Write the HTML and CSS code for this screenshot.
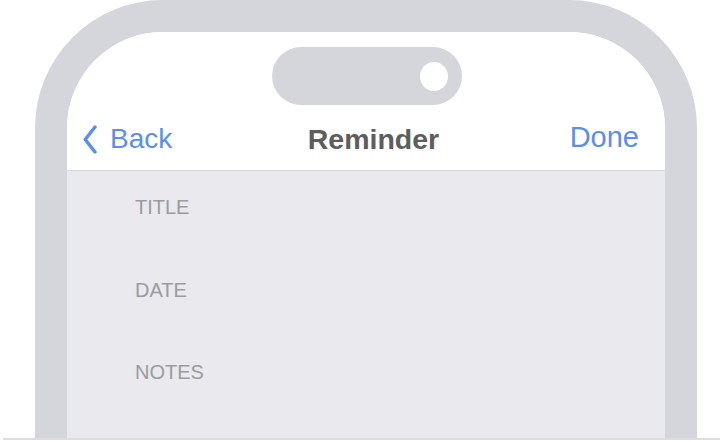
FILE: index.html
```html
<!DOCTYPE html>
<html>
<head>
<meta charset="utf-8">
<link rel="stylesheet" href="styles.css">
</head>
<body>
<div class="stage">
  <div class="phone">
    <div class="screen">
      <header class="nav">
        <div class="island"><span class="camera"></span></div>
        <div class="nav-row">
          <a class="back">
            <svg class="chevron" width="16" height="30" viewBox="0 0 16 30"><path d="M12 2 L2.2 14.5 L12 27" fill="none" stroke="#5b8fea" stroke-width="3.4" stroke-linecap="round" stroke-linejoin="round"/></svg>
            <span>Back</span>
          </a>
          <h1 class="title">Reminder</h1>
          <a class="done">Done</a>
        </div>
      </header>
      <main class="content">
        <div class="label">TITLE</div>
        <div class="label">DATE</div>
        <div class="label">NOTES</div>
      </main>
    </div>
  </div>
</div>
</body>
</html>
```

FILE: styles.css
```css
html, body {
  margin: 0;
  padding: 0;
  background: #ffffff;
}
body {
  font-family: "Liberation Sans", Arial, sans-serif;
}
.stage {
  margin-left: 3px;
  width: 717px;
  height: 438px;
  overflow: hidden;
  border-bottom: 2px solid #dddde1;
}
.phone {
  margin-left: 32px;
  width: 598px;
  height: 600px;
  border: 32px solid #d5d6db;
  border-bottom: none;
  border-radius: 128px 128px 0 0;
  overflow: hidden;
  background: #ffffff;
}
.screen {
  display: flex;
  flex-direction: column;
  height: 100%;
}
.nav {
  background: #ffffff;
  display: flex;
  flex-direction: column;
  align-items: center;
  padding-top: 15px;
  padding-bottom: 15px;
  border-bottom: 1px solid #d7d7dc;
}
.island {
  width: 190px;
  height: 58px;
  border-radius: 29px;
  background: #d5d6db;
  display: flex;
  align-items: center;
  justify-content: flex-end;
  padding-right: 14px;
  box-sizing: border-box;
  margin-left: 2px;
}
.camera {
  width: 28px;
  height: 29px;
  border-radius: 50%;
  background: #ffffff;
}
.nav-row {
  margin-top: 18px;
  align-self: stretch;
  display: flex;
  align-items: flex-start;
  justify-content: space-between;
  padding: 0 26px 0 16px;
  height: 32px;
}
.back {
  display: flex;
  align-items: flex-start;
  gap: 11px;
  color: #5b8fea;
  font-size: 28px;
  line-height: 32px;
}
.chevron {
  display: block;
  margin-top: 1.5px;
}
.title {
  margin: 0 0 0 5px;
  font-size: 28.5px;
  line-height: 32px;
  font-weight: 700;
  color: #5d5d5d;
}
.done {
  color: #5b8fea;
  font-size: 29px;
  line-height: 32px;
  margin-top: -2px;
}
.content {
  flex: 1;
  background: #e9e9ee;
  padding: 24px 0 0 68px;
  display: flex;
  flex-direction: column;
  gap: 58.5px;
}
.label {
  font-size: 20px;
  line-height: 24px;
  color: #9b9ba0;
}
```
